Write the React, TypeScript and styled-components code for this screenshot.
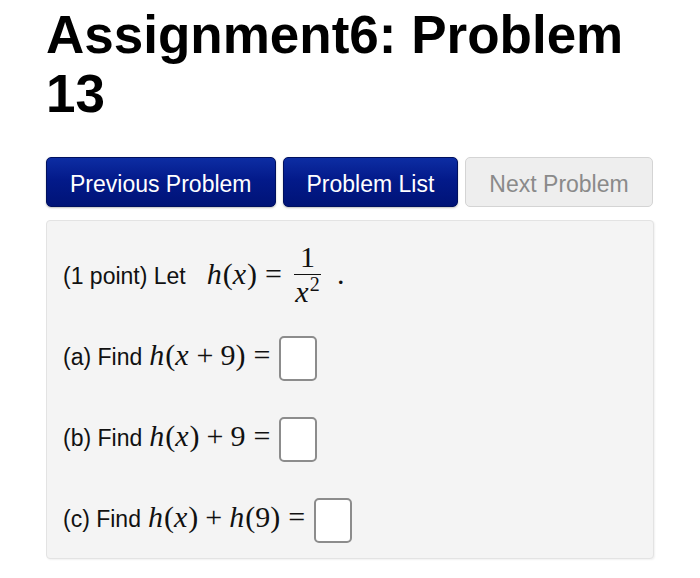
import React from 'react';
import styled, { createGlobalStyle } from 'styled-components';

const Global = createGlobalStyle`
  body {
    margin: 0;
    background: #fff;
    font-family: "Liberation Sans", Arial, sans-serif;
    color: #111;
  }
`;

const Page = styled.div`
  padding: 5px 46px 20px;
  width: 608px;
`;

const Title = styled.h1`
  margin: 0;
  font-size: 53px;
  line-height: 59px;
  font-weight: bold;
  color: #000;
`;

const Nav = styled.div`
  display: flex;
  gap: 7px;
  margin-top: 34px;
`;

const NavButton = styled.button<{ $disabled?: boolean }>`
  height: 50px;
  padding: 4px 23px 0;
  box-sizing: border-box;
  font-family: "Liberation Sans", Arial, sans-serif;
  font-size: 23px;
  border-radius: 5px;
  cursor: pointer;
  color: ${(p) => (p.$disabled ? '#8a8a8a' : '#fff')};
  background: ${(p) =>
    p.$disabled ? '#eeeeee' : 'linear-gradient(#0d2da3, #031a8a 45%, #001377)'};
  border: 1px solid ${(p) => (p.$disabled ? '#d4d4d4' : '#00105e')};
  box-shadow: ${(p) => (p.$disabled ? 'none' : '0 1px 2px rgba(0, 0, 0, 0.25)')};
`;

const Panel = styled.div`
  margin-top: 13px;
  background: #f4f4f4;
  border: 1px solid #e3e3e3;
  border-radius: 4px;
  box-shadow: 1px 1px 2px rgba(0, 0, 0, 0.06);
  padding: 21px 16px 11px;
  display: flex;
  flex-direction: column;
  gap: 21px;
`;

const Line = styled.div<{ $extra?: number }>`
  height: 60px;
  line-height: 60px;
  font-size: 23px;
  white-space: nowrap;
  margin-bottom: ${(p) => p.$extra || 0}px;
`;

const Math = styled.span<{ $gap?: number }>`
  font-family: "Liberation Serif", "Times New Roman", serif;
  font-size: 30px;
  margin-left: ${(p) => p.$gap ?? 7}px;
`;

const Mi = styled.span`
  font-style: italic;
  margin-right: 1px;
`;

const Mo = styled.span<{ $kind?: 'rel' | 'bin' }>`
  margin: 0 ${(p) => (p.$kind === 'rel' ? 8 : p.$kind === 'bin' ? 7 : 0)}px;
`;

const Frac = styled.span`
  display: inline-flex;
  flex-direction: column;
  align-items: center;
  vertical-align: 17px;
  line-height: 1;
  margin: 0 4px;
`;

const Num = styled.span`
  padding: 0 6px 2px;
  border-bottom: 1.5px solid #111;
`;

const Den = styled.span`
  padding-top: 2px;
`;

const Sup = styled.sup`
  font-size: 20px;
  font-style: normal;
  vertical-align: 11px;
  line-height: 0;
`;

const Answer = styled.span`
  display: inline-block;
  box-sizing: border-box;
  width: 38px;
  height: 45px;
  vertical-align: middle;
  background: #fff;
  border: 2px solid #8c8c8c;
  border-radius: 5px;
  margin-left: 1px;
`;

const App: React.FC = () => {
  return (
    <Page>
      <Global />
      <Title>Assignment6: Problem 13</Title>
      <Nav>
        <NavButton>Previous Problem</NavButton>
        <NavButton>Problem List</NavButton>
        <NavButton $disabled>Next Problem</NavButton>
      </Nav>
      <Panel>
        <Line $extra={2}>
          (1 point) Let
          <Math $gap={21}>
            <Mi>h</Mi>(<Mi>x</Mi>)<Mo $kind="rel">=</Mo>
            <Frac>
              <Num>1</Num>
              <Den>
                <Mi>x</Mi>
                <Sup>2</Sup>
              </Den>
            </Frac>
          </Math>
          <Math $gap={12}>.</Math>
        </Line>
        <Line>
          (a) Find
          <Math>
            <Mi>h</Mi>(<Mi>x</Mi>
            <Mo $kind="bin">+</Mo>9)<Mo $kind="rel">=</Mo>
          </Math>
          <Answer />
        </Line>
        <Line>
          (b) Find
          <Math>
            <Mi>h</Mi>(<Mi>x</Mi>)<Mo $kind="bin">+</Mo>9<Mo $kind="rel">=</Mo>
          </Math>
          <Answer />
        </Line>
        <Line>
          (c) Find
          <Math>
            <Mi>h</Mi>(<Mi>x</Mi>)<Mo $kind="bin">+</Mo>
            <Mi>h</Mi>(9)<Mo $kind="rel">=</Mo>
          </Math>
          <Answer />
        </Line>
      </Panel>
    </Page>
  );
};

export default App;
